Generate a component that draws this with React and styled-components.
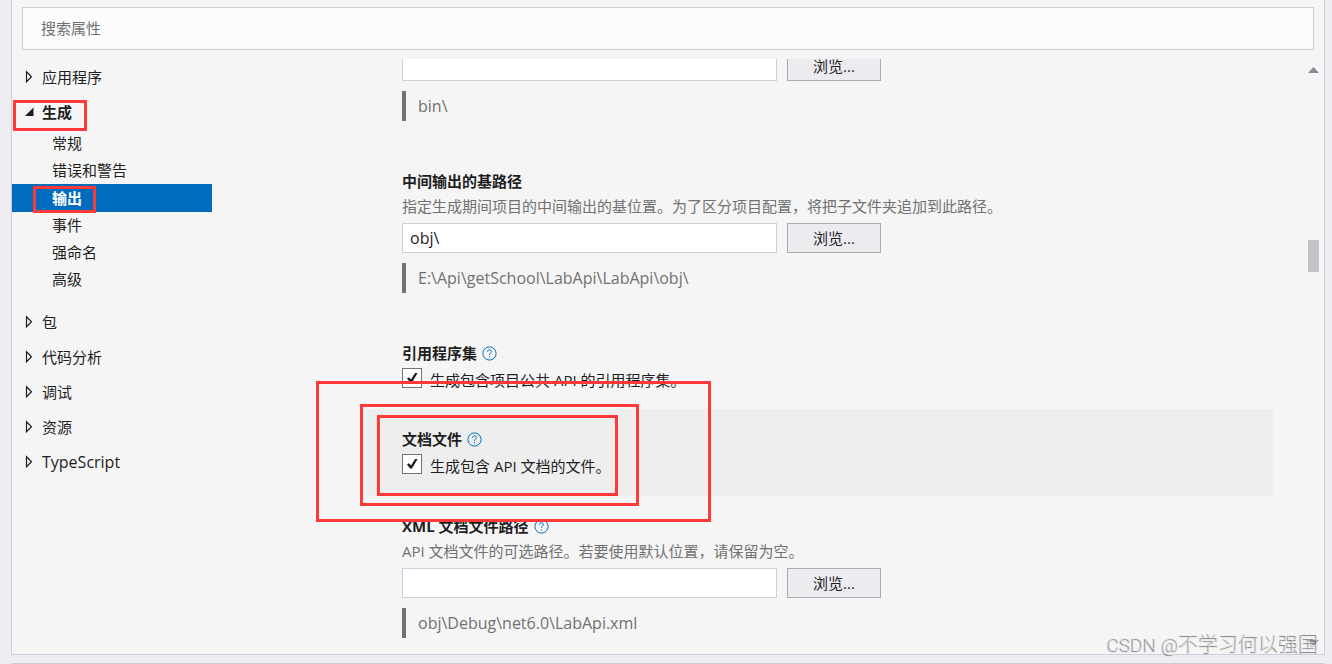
import React, { useState } from 'react';
import styled, { createGlobalStyle, css } from 'styled-components';

const GlobalStyle = createGlobalStyle`
    * {
        box-sizing: border-box;
    }

    body {
        margin: 0;
        background: #eeeef2;
        color: #1e1e1e;
        font: 15px/24px 'Open Sans', 'Noto Sans CJK SC', sans-serif;
    }

    button, input {
        font: inherit;
        color: inherit;
    }
`;

const Page = styled.div`
    position: relative;
    display: flex;
    flex-direction: column;
    height: 100vh;
    padding: 0 7px 0 11px;
    overflow: hidden;
`;

const Panel = styled.main`
    display: flex;
    flex: 1;
    flex-direction: column;
    min-height: 0;
    background: #f5f5f5;
    border: 1px solid #cccedb;
    border-top: 0;
`;

const NextPanel = styled.div`
    flex: none;
    height: 1px;
    margin-top: 8px;
    background: #cccedb;
`;

const Search = styled.input`
    flex: none;
    height: 43px;
    margin: 7px 10px 9px;
    padding: 0 18px 2px;
    background: #fcfcfc;
    border: 1px solid #cccedb;
    outline: 0;

    &::placeholder {
        color: #717171;
        opacity: 1;
    }
`;

const Body = styled.div`
    display: flex;
    flex: 1;
    min-height: 0;
`;

const Nav = styled.nav`
    flex: none;
    width: 200px;
    margin-right: 155px;
`;

const NavGroup = styled.button`
    display: flex;
    align-items: center;
    gap: 8px;
    width: 100%;
    height: 35px;
    padding: 0 0 0 12px;
    background: none;
    border: 0;
    font-size: ${({ $latin }) => ($latin ? 16 : 15)}px;
    font-weight: ${({ $open }) => ($open ? 700 : 400)};
    text-align: left;
`;

const NavList = styled.ul`
    margin: 0 0 11px;
    padding: 1px 0 0;
    list-style: none;
`;

const NavLink = styled.a`
    display: block;
    height: 27px;
    padding-left: 40px;
    color: inherit;
    line-height: 27px;
    text-decoration: none;

    ${({ $active }) => $active && css`
        height: 28px;
        background: #006cbe;
        color: #fff;
        font-weight: 700;
        line-height: 28px;
    `}
`;

const Content = styled.div`
    flex: 1;
    min-width: 0;
    overflow: hidden;
`;

const Section = styled.section`
    padding: 18px 0 ${({ $compact }) => ($compact ? '17px' : '30px')} 35px;

    ${({ $highlight }) => $highlight && css`
        padding-bottom: 18px;
        background: #eeeeee;
    `}

    ${({ $cut }) => $cut && css`
        margin-top: -8px;
        padding-top: 0;
    `}
`;

const Title = styled.h2`
    display: flex;
    align-items: center;
    gap: 5px;
    margin: 0;
    font-size: 15px;
    line-height: 24px;
`;

const Description = styled.p`
    margin: 1px 0 5px;
    color: #717171;
`;

const Field = styled.div`
    display: flex;
    gap: 10px;
`;

const TextBox = styled.input`
    width: 375px;
    height: 30px;
    padding: 0 7px;
    background: #fff;
    border: 1px solid #cccedb;
    outline: 0;
    font-size: 16px;
`;

const Browse = styled.button`
    width: 94px;
    height: 30px;
    padding: 0;
    background: #ececf0;
    border: 1px solid #acacac;
`;

const Hint = styled.div`
    height: 30px;
    margin-top: 10px;
    padding-left: 12px;
    border-left: 4px solid #717171;
    color: #717171;
    font-size: 16px;
    line-height: 30px;
`;

const CheckLabel = styled.label`
    display: flex;
    align-items: flex-start;
    gap: 8px;
    margin-top: 3px;
`;

const CheckInput = styled.input`
    appearance: none;
    flex: none;
    width: 20px;
    height: 20px;
    margin: 0;
    background: #fff;
    border: 1px solid #717171;

    &:checked {
        background: #fff url("data:image/svg+xml,%3Csvg xmlns='http://www.w3.org/2000/svg' viewBox='0 0 18 18'%3E%3Cpath d='M4 9.4 6 8.2l2 2.3 4-6.500h2.600l-5.600 9.600H7z' fill='%231e1e1e'/%3E%3C/svg%3E") center / 18px 18px no-repeat;
    }
`;

const HelpButton = styled.button`
    display: flex;
    padding: 0;
    background: none;
    border: 0;
    color: #0070c6;
`;

const ScrollBar = styled.div`
    display: flex;
    flex: none;
    flex-direction: column;
    align-items: center;
    width: 11px;
    margin: 0 5px 0 35px;
    padding: 8px 0;
    color: #868999;
`;

const Track = styled.div`
    flex: 1;
    width: 11px;
    padding-top: 167px;
`;

const Thumb = styled.div`
    height: 32px;
    background: #c2c3c9;
`;

const Mark = styled.div`
    position: absolute;
    top: ${({ $y }) => $y}px;
    left: ${({ $x }) => $x}px;
    width: ${({ $w }) => $w}px;
    height: ${({ $h }) => $h}px;
    border: 3px solid #ff3838;
    pointer-events: none;
`;

const Watermark = styled.div`
    position: absolute;
    right: 13px;
    bottom: 5px;
    color: rgba(245, 245, 245, 0.6);
    font: 300 20px/28px Roboto, 'Noto Sans CJK SC', sans-serif;
    text-shadow: -1px 1px 1px #777;
    white-space: nowrap;

    span {
        font-size: 19px;
    }
`;

const Chevron = ({ open }) => (
    <svg width="10" height="14" viewBox="0 0 10 14" aria-hidden="true">
        {open
            ? <path d="M9.5 2.5V11H1z" fill="#1e1e1e" />
            : <path d="M2.5 1.8v9.9l5-4.95z" fill="none" stroke="#1e1e1e" strokeWidth="1.2" />}
    </svg>
);

const Help = () => (
    <HelpButton aria-label="帮助">
        <svg width="15" height="15" viewBox="0 0 15 15" fill="none" stroke="currentColor">
            <circle cx="7.5" cy="7.5" r="6.6" />
            <path d="M5.6 5.8C5.6 4.5 6.4 3.8 7.5 3.8s1.9.7 1.9 1.7C9.4 6.9 7.5 7 7.5 8.9" />
            <path d="M7.5 10.2v1.2" />
        </svg>
    </HelpButton>
);

const Arrow = ({ down }) => (
    <svg width="11" height="6" viewBox="0 0 11 6" aria-hidden="true">
        <path d={down ? 'M0 0h11L5.5 6z' : 'M0 6h11L5.5 0z'} fill="currentColor" />
    </svg>
);

const PathField = ({ label, value = '', hint }) => {
    const [text, setText] = useState(value);

    return (
        <>
            <Field>
                <TextBox aria-label={label} value={text} onChange={e => setText(e.target.value)} />
                <Browse>浏览...</Browse>
            </Field>
            <Hint>{hint}</Hint>
        </>
    )
}

const Check = ({ children }) => (
    <CheckLabel>
        <CheckInput type="checkbox" defaultChecked />
        {children}
    </CheckLabel>
);

const groups = [
    { name: '应用程序' },
    { name: '生成', items: ['常规', '错误和警告', '输出', '事件', '强命名', '高级'] },
    { name: '包' },
    { name: '代码分析' },
    { name: '调试' },
    { name: '资源' },
    { name: 'TypeScript', latin: true },
];

const marks = [
    [13, 100, 74, 31],
    [33, 186, 63, 27],
    [316, 381, 395, 141],
    [360, 404, 279, 102],
    [377, 415, 241, 81],
];

const App = () => (
    <Page>
        <GlobalStyle />
        <Panel>
            <Search type="text" placeholder="搜索属性" aria-label="搜索属性" />
            <Body>
                <Nav>
                    {groups.map(({ name, items, latin }) => (
                        <React.Fragment key={name}>
                            <NavGroup $open={!!items} $latin={latin} aria-expanded={!!items}>
                                <Chevron open={!!items} />
                                {name}
                            </NavGroup>
                            {items && (
                                <NavList>
                                    {items.map(item => (
                                        <li key={item}>
                                            <NavLink href="#" $active={item === '输出'}>{item}</NavLink>
                                        </li>
                                    ))}
                                </NavList>
                            )}
                        </React.Fragment>
                    ))}
                </Nav>
                <Content>
                    <Section $cut>
                        <PathField label="基输出路径" hint="bin\" />
                    </Section>
                    <Section>
                        <Title>中间输出的基路径</Title>
                        <Description>指定生成期间项目的中间输出的基位置。为了区分项目配置，将把子文件夹追加到此路径。</Description>
                        <PathField label="中间输出的基路径" value="obj\" hint="E:\Api\getSchool\LabApi\LabApi\obj\" />
                    </Section>
                    <Section $compact>
                        <Title>引用程序集 <Help /></Title>
                        <Check>生成包含项目公共 API 的引用程序集。</Check>
                    </Section>
                    <Section $highlight>
                        <Title>文档文件 <Help /></Title>
                        <Check>生成包含 API 文档的文件。</Check>
                    </Section>
                    <Section>
                        <Title>XML 文档文件路径 <Help /></Title>
                        <Description>API 文档文件的可选路径。若要使用默认位置，请保留为空。</Description>
                        <PathField label="XML 文档文件路径" hint="obj\Debug\net6.0\LabApi.xml" />
                    </Section>
                </Content>
                <ScrollBar>
                    <Arrow />
                    <Track><Thumb /></Track>
                    <Arrow down />
                </ScrollBar>
            </Body>
        </Panel>
        <NextPanel />
        {marks.map(([x, y, w, h]) => <Mark key={x} $x={x} $y={y} $w={w} $h={h} />)}
        <Watermark><span>CSDN @</span>不学习何以强国</Watermark>
    </Page>
);

export default App;
